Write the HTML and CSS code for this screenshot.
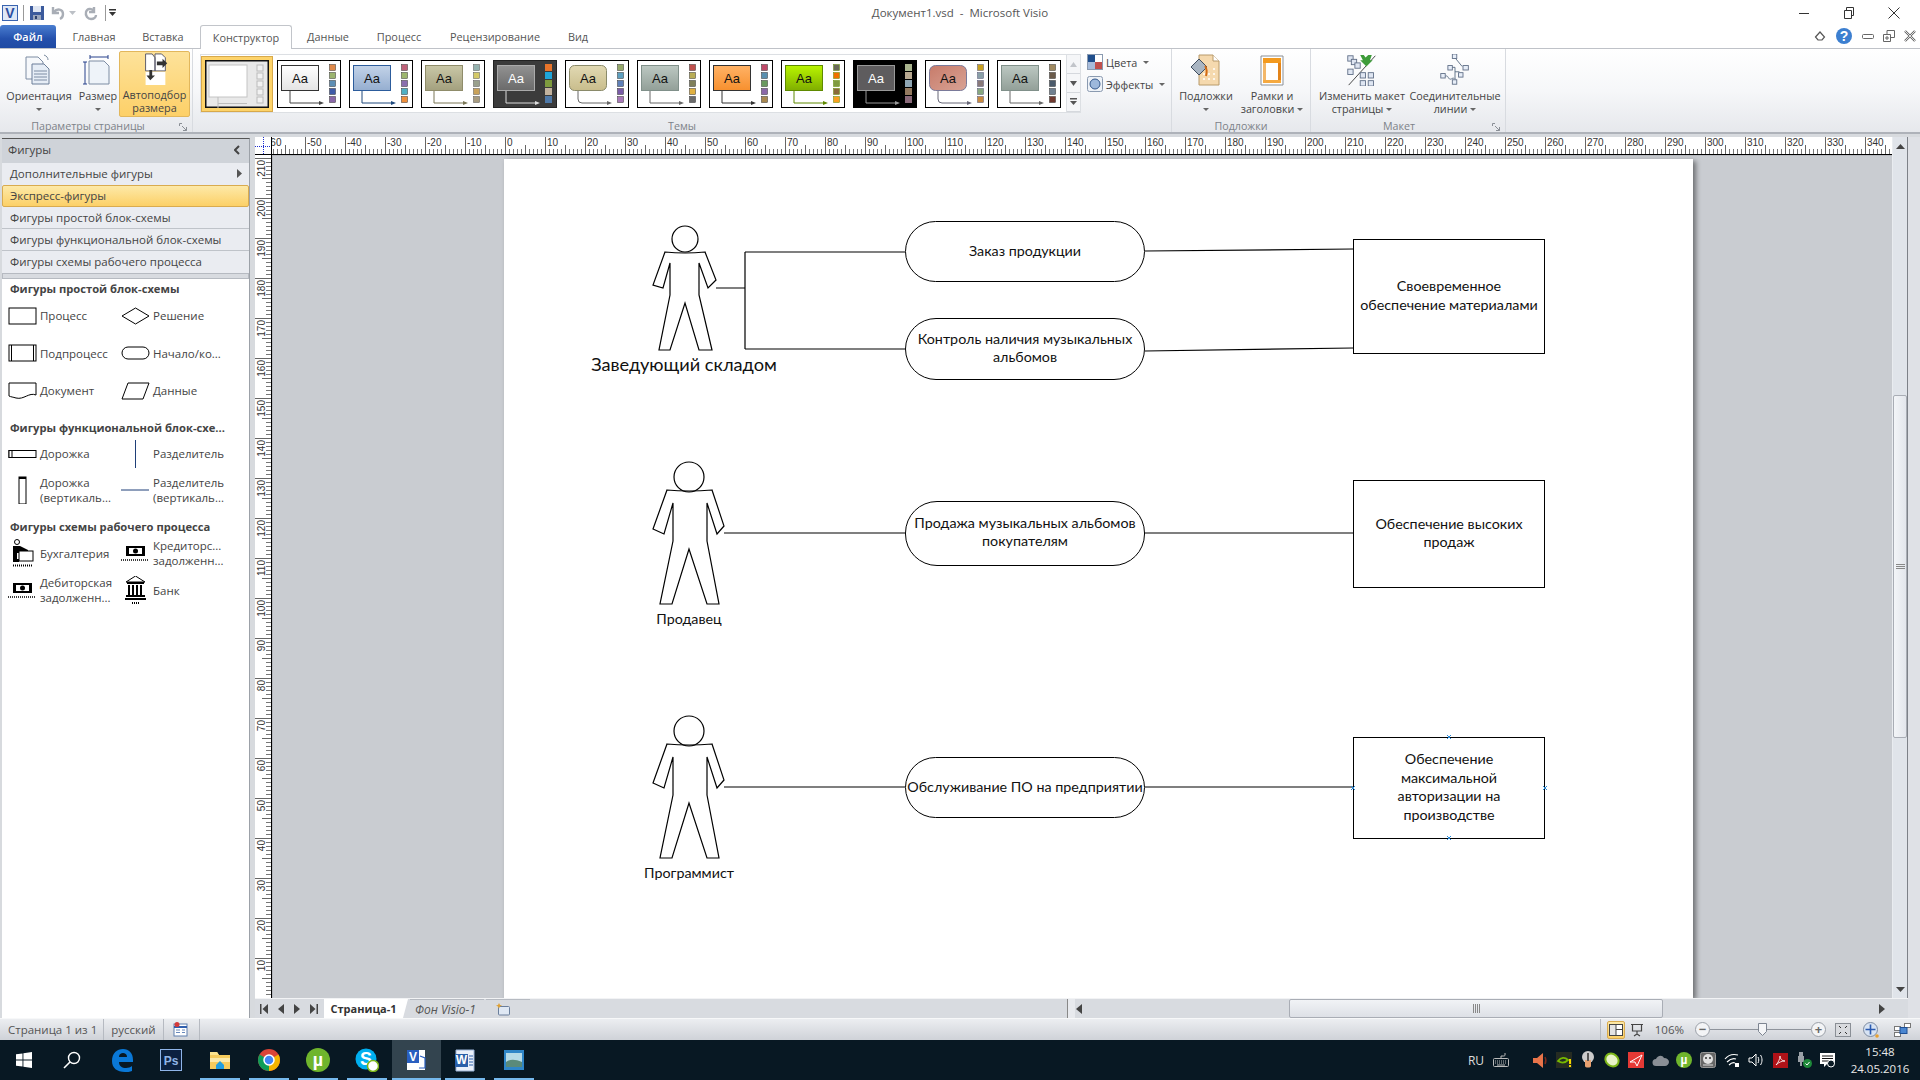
FILE: index.html
```html
<!DOCTYPE html>
<html lang="ru">
<head>
<meta charset="utf-8">
<title>Документ1.vsd - Microsoft Visio</title>
<link rel="stylesheet" href="styles.css">
</head>
<body>
<div class="app">
  <header class="titlebar">
    <div class="qat">
      <svg width="16" height="16" viewBox="0 0 16 16"><rect x=".5" y=".5" width="15" height="15" fill="#dfe8f6" stroke="#3a64b0"/><text x="8" y="13" class="ico-v">V</text></svg>
      <i class="qsep"></i>
      <svg width="16" height="16" viewBox="0 0 16 16"><path d="M1 1h14v14H1z" fill="#3b5a9c"/><path d="M4 1h8v6H4z" fill="#dfe6f2"/><path d="M4 10h8v5H4z" fill="#9aa6bc"/><path d="M6 11h2v3H6z" fill="#2b3f6c"/></svg>
      <svg class="q-undo" width="18" height="16" viewBox="0 0 18 16"><path d="M3 2v6h6M4 7c3-4 9-3 9 2 0 2-1 4-3 5" fill="none" stroke="#a9aeb6" stroke-width="2.4"/></svg>
      <svg width="7" height="6" viewBox="0 0 7 6" class="q-drop"><path d="M0 1h7L3.500 5z" fill="#bcc0c6"/></svg>
      <svg class="q-redo" width="16" height="16" viewBox="0 0 16 16"><path d="M11 2v5h-5M11 6C9 3 4 3 3 7c-1 4 2 7 5 7 3 0 5-2 5-4" fill="none" stroke="#a9aeb6" stroke-width="2.400"/></svg>
      <i class="qsep q-last"></i>
      <svg width="7" height="8" viewBox="0 0 7 8"><path d="M0 0h7v1.500H0zM0 3h7L3.500 7z" fill="#333"/></svg>
    </div>
    <div class="doc-title">Документ1.vsd  -  Microsoft Visio</div>
    <div class="winbtns">
      <svg width="12" height="12" viewBox="0 0 12 12"><path d="M1 6.500h10" stroke="#333"/></svg>
      <svg width="12" height="12" viewBox="0 0 12 12"><path d="M1.500 3.500h7v8h-7zM3.500 3.500v-3h7v8h-2" fill="none" stroke="#333"/></svg>
      <svg width="12" height="12" viewBox="0 0 12 12"><path d="M.5.500l11 11M11.500.500l-11 11" stroke="#333"/></svg>
    </div>
  </header>

  <nav class="tabs">
    <span class="tab tab-file">Файл</span>
    <span class="tab tab-home">Главная</span>
    <span class="tab tab-ins">Вставка</span>
    <span class="tab tab-active">Конструктор</span>
    <span class="tab tab-data">Данные</span>
    <span class="tab tab-proc">Процесс</span>
    <span class="tab tab-rev">Рецензирование</span>
    <span class="tab tab-view">Вид</span>
    <div class="mdibtns">
      <svg width="12" height="12" viewBox="0 0 12 12"><path d="M1.500 7L6 2l4.500 5L8 10H4z" fill="none" stroke="#555" stroke-width="1.200"/></svg>
      <svg width="18" height="18" viewBox="0 0 18 18"><circle cx="9" cy="9" r="8" fill="#3c7fd0"/><text x="9" y="14" class="ico-help">?</text></svg>
      <svg width="12" height="12" viewBox="0 0 12 12"><rect x=".5" y="4.500" width="11" height="4" rx="1" fill="none" stroke="#666"/></svg>
      <svg width="12" height="12" viewBox="0 0 12 12"><path d="M.5 4.500h7v7h-7zM4 4.500v-4h7.500v7h-4M3 7h2v2H3z" fill="none" stroke="#666"/></svg>
      <svg width="12" height="12" viewBox="0 0 12 12"><path d="M1 1l10 10M11 1L1 11" stroke="#666" stroke-width="2.400"/><path d="M1 1l10 10M11 1L1 11" stroke="#fff" stroke-width=".8"/></svg>
    </div>
  </nav>

  <section class="ribbon">
    <div class="group g-page">
      <div class="group-body">
        <div class="rbtn b-orient">
          <svg class="ricon" width="32" height="32" viewBox="0 0 32 32"><path d="M3 3h12l5 5v17H3z" fill="#f6f8fb" stroke="#7d8ca3"/><path d="M9 10h12l5 5v15H9z" fill="#e6edf6" stroke="#6d7f99"/><path d="M11 17h13M11 20h13M11 23h13M11 26h13" stroke="#7d8ca3"/><path d="M21 1c3 1 4 3 4 5" fill="none" stroke="#7a8a9e"/></svg>
          <span>Ориентация</span><b class="caret"></b>
        </div>
        <div class="rbtn b-size">
          <svg class="ricon" width="32" height="32" viewBox="0 0 32 32"><path d="M7 7h15l5 5v18H7z" fill="#eef3f9" stroke="#7d8ca3"/><path d="M3 8v22M1 8h4M1 30h4M8 3h18M8 1v4M26 1v4" stroke="#27408b" fill="none"/></svg>
          <span>Размер</span><b class="caret"></b>
        </div>
        <div class="rbtn b-fit">
          <svg class="ricon" width="32" height="34" viewBox="0 0 32 34"><path d="M6 1h7l3 4v14H6zM16 1h7l4 4v14H16z" fill="#fff" stroke="#556"/><path d="M6 20h21v14H6z" fill="#fff"/><path d="M18 9h6V6l5 5-5 5v-3h-6zM10 18v6H7l4 5 5-5h-3v-6z" fill="#333"/></svg>
          <span>Автоподбор размера</span>
        </div>
      </div>
      <div class="group-label gl-page">Параметры страницы<svg class="launch" width="8" height="8" viewBox="0 0 8 8"><path d="M.5 3V.5H3M7.500 7.500L3 3M7.500 4v3.500H4" fill="none" stroke="#8a8f96"/></svg></div>
    </div>

    <div class="group g-themes">
      <div class="group-body">
        <div class="gallery">
          <div class="thumbs">
            <div class="thumb-sel">
              <svg width="64" height="48" viewBox="0 0 64 48"><rect x=".75" y=".75" width="62.500" height="46.500" fill="#e9e9e9" stroke="#111" stroke-width="1.500"/><rect x="4" y="5" width="38" height="32" fill="#fff" stroke="#c4c4c4"/><path d="M13 37v11M13 43.500h29" fill="none" stroke="#bdbdbd"/><g fill="#f2f2f2" stroke="#bbb"><rect x="52" y="5" width="6" height="6"/><rect x="52" y="13" width="6" height="6"/><rect x="52" y="21" width="6" height="6"/><rect x="52" y="29" width="6" height="6"/><rect x="52" y="37" width="6" height="6"/></g></svg>
            </div>
            <svg width="64" height="48" viewBox="0 0 64 48"><defs><linearGradient id="g1" x1="0" y1="0" x2="0" y2="1"><stop offset="0" stop-color="#fff"/><stop offset="1" stop-color="#e4e4e4"/></linearGradient><linearGradient id="g2" x1="0" y1="0" x2="0" y2="1"><stop offset="0" stop-color="#c3d3e8"/><stop offset="1" stop-color="#95aed0"/></linearGradient><linearGradient id="g3" x1="0" y1="0" x2="0" y2="1"><stop offset="0" stop-color="#c9c7a7"/><stop offset="1" stop-color="#a3a07e"/></linearGradient><linearGradient id="g4" x1="0" y1="0" x2="0" y2="1"><stop offset="0" stop-color="#929292"/><stop offset="1" stop-color="#6a6a6a"/></linearGradient><linearGradient id="g5" x1="0" y1="0" x2="0" y2="1"><stop offset="0" stop-color="#e1d9b3"/><stop offset="1" stop-color="#c9bd8c"/></linearGradient><linearGradient id="g6" x1="0" y1="0" x2="0" y2="1"><stop offset="0" stop-color="#bcc8c2"/><stop offset="1" stop-color="#929f98"/></linearGradient><linearGradient id="g7" x1="0" y1="0" x2="0" y2="1"><stop offset="0" stop-color="#ffb266"/><stop offset="1" stop-color="#f7902e"/></linearGradient><linearGradient id="g8" x1="0" y1="0" x2="0" y2="1"><stop offset="0" stop-color="#b9f500"/><stop offset="1" stop-color="#7fae00"/></linearGradient><linearGradient id="g10" x1="0" y1="0" x2="1" y2="1"><stop offset="0" stop-color="#c77b6a"/><stop offset="1" stop-color="#d9a395"/></linearGradient></defs><rect x=".5" y=".5" width="63" height="47" fill="#fff" stroke="#000"/><rect x="4.500" y="5.500" width="37" height="25" fill="url(#g1)" stroke="#333"/><text x="23" y="23" class="aa">Aa</text><path d="M13 31v12h29" fill="none" stroke="#444"/><path d="M42 41l5 2-5 2z" fill="#444"/><g stroke="#333" stroke-width=".5"><rect x="52.500" y="4.500" width="6" height="6" fill="#e08a4a"/><rect x="52.500" y="12.500" width="6" height="6" fill="#9bb46e"/><rect x="52.500" y="20.500" width="6" height="6" fill="#5e8fb5"/><rect x="52.500" y="28.500" width="6" height="6" fill="#3f5ba8"/><rect x="52.500" y="36.500" width="6" height="6" fill="#8a68a8"/></g></svg>
            <svg width="64" height="48" viewBox="0 0 64 48"><rect x=".5" y=".5" width="63" height="47" fill="#fff" stroke="#000"/><rect x="4.500" y="5.500" width="37" height="25" fill="url(#g2)" stroke="#2c5c9c"/><text x="23" y="23" class="aa">Aa</text><path d="M13 31v12h29" fill="none" stroke="#1f497d"/><path d="M42 41l5 2-5 2z" fill="#1f497d"/><g stroke="#333" stroke-width=".5"><rect x="52.500" y="4.500" width="6" height="6" fill="#c0627a"/><rect x="52.500" y="12.500" width="6" height="6" fill="#9db66e"/><rect x="52.500" y="20.500" width="6" height="6" fill="#8a6fae"/><rect x="52.500" y="28.500" width="6" height="6" fill="#4fb0c4"/><rect x="52.500" y="36.500" width="6" height="6" fill="#ef8f3c"/></g></svg>
            <svg width="64" height="48" viewBox="0 0 64 48"><rect x=".5" y=".5" width="63" height="47" fill="#fff" stroke="#000"/><rect x="4.500" y="5.500" width="37" height="25" fill="url(#g3)" stroke="#8f8c6a"/><text x="23" y="23" class="aa">Aa</text><path d="M13 31v12h29" fill="none" stroke="#7a7757"/><path d="M42 41l5 2-5 2z" fill="#7a7757"/><g stroke="#555" stroke-width=".5"><rect x="52.500" y="4.500" width="6" height="6" fill="#95b3b0"/><rect x="52.500" y="12.500" width="6" height="6" fill="#d4c968"/><rect x="52.500" y="20.500" width="6" height="6" fill="#99a08c"/><rect x="52.500" y="28.500" width="6" height="6" fill="#c9a25a"/><rect x="52.500" y="36.500" width="6" height="6" fill="#a89c80"/></g></svg>
            <svg width="64" height="48" viewBox="0 0 64 48"><rect x=".5" y=".5" width="63" height="47" fill="#3b3b3b" stroke="#222"/><rect x="4.500" y="5.500" width="37" height="25" fill="url(#g4)" stroke="#aaa"/><text x="23" y="23" class="aa aa-w">Aa</text><path d="M13 31v12h29" fill="none" stroke="#ddd"/><path d="M42 41l5 2-5 2z" fill="#ddd"/><rect x="52" y="4" width="7" height="7" fill="#e8742a"/><rect x="52" y="12" width="7" height="7" fill="#1fa5d9"/><rect x="52" y="20" width="7" height="7" fill="#7e9b3e"/><rect x="52" y="28" width="7" height="7" fill="#c2b29e"/><rect x="52" y="36" width="7" height="7" fill="#4f79a8"/></svg>
            <svg width="64" height="48" viewBox="0 0 64 48"><rect x=".5" y=".5" width="63" height="47" fill="#fff" stroke="#000"/><rect x="4.500" y="5.500" width="37" height="25" rx="5" fill="url(#g5)" stroke="#8a8a6a"/><text x="23" y="23" class="aa">Aa</text><path d="M13 31v8q0 4 4 4h25" fill="none" stroke="#666"/><path d="M42 41l5 2-5 2z" fill="#666"/><g stroke="#333" stroke-width=".5"><rect x="52.500" y="4.500" width="6" height="6" fill="#96a96b"/><rect x="52.500" y="12.500" width="6" height="6" fill="#5ea0c0"/><rect x="52.500" y="20.500" width="6" height="6" fill="#5f80b8"/><rect x="52.500" y="28.500" width="6" height="6" fill="#7a5ca8"/><rect x="52.500" y="36.500" width="6" height="6" fill="#a878b8"/></g></svg>
            <svg width="64" height="48" viewBox="0 0 64 48"><rect x=".5" y=".5" width="63" height="47" fill="#fff" stroke="#000"/><rect x="4.500" y="5.500" width="37" height="25" fill="url(#g6)" stroke="#80908a"/><text x="23" y="23" class="aa">Aa</text><path d="M13 31v12h29" fill="none" stroke="#666"/><path d="M42 41l5 2-5 2z" fill="#666"/><g stroke="#333" stroke-width=".5"><rect x="52.500" y="4.500" width="6" height="6" fill="#c0504d"/><rect x="52.500" y="12.500" width="6" height="6" fill="#b8ac55"/><rect x="52.500" y="20.500" width="6" height="6" fill="#7f7f5a"/><rect x="52.500" y="28.500" width="6" height="6" fill="#e0b040"/><rect x="52.500" y="36.500" width="6" height="6" fill="#6b6b6b"/></g></svg>
            <svg width="64" height="48" viewBox="0 0 64 48"><rect x=".5" y=".5" width="63" height="47" fill="#fff" stroke="#000"/><rect x="4.500" y="5.500" width="37" height="25" fill="url(#g7)" stroke="#333"/><text x="23" y="23" class="aa">Aa</text><path d="M13 31v12h29" fill="none" stroke="#333"/><path d="M42 41l5 2-5 2z" fill="#333"/><g stroke="#333" stroke-width=".5"><rect x="52.500" y="4.500" width="6" height="6" fill="#c04a6a"/><rect x="52.500" y="12.500" width="6" height="6" fill="#5a90b0"/><rect x="52.500" y="20.500" width="6" height="6" fill="#6a9a60"/><rect x="52.500" y="28.500" width="6" height="6" fill="#8a68a8"/><rect x="52.500" y="36.500" width="6" height="6" fill="#a88850"/></g></svg>
            <svg width="64" height="48" viewBox="0 0 64 48"><rect x=".5" y=".5" width="63" height="47" fill="#fff" stroke="#000"/><rect x="4.500" y="5.500" width="37" height="25" fill="url(#g8)" stroke="#5f8a00"/><text x="23" y="23" class="aa">Aa</text><path d="M13 31v12h29" fill="none" stroke="#5f8a00"/><path d="M42 41l5 2-5 2z" fill="#5f8a00"/><g stroke="#5f8a00" stroke-width=".5"><rect x="52.500" y="4.500" width="6" height="6" fill="#6a6a5a"/><rect x="52.500" y="12.500" width="6" height="6" fill="#f07000"/><rect x="52.500" y="20.500" width="6" height="6" fill="#7f9a40"/><rect x="52.500" y="28.500" width="6" height="6" fill="#8a6a3a"/><rect x="52.500" y="36.500" width="6" height="6" fill="#f8a020"/></g></svg>
            <svg width="64" height="48" viewBox="0 0 64 48"><rect x=".5" y=".5" width="63" height="47" fill="#000" stroke="#000"/><rect x="4.500" y="5.500" width="37" height="25" fill="#5e5c5e" stroke="#999"/><text x="23" y="23" class="aa aa-w">Aa</text><path d="M13 31v12h29" fill="none" stroke="#999"/><path d="M42 41l5 2-5 2z" fill="#999"/><rect x="52" y="4" width="7" height="7" fill="#a9b48e"/><rect x="52" y="12" width="7" height="7" fill="#b8a890"/><rect x="52" y="20" width="7" height="7" fill="#8fa6b4"/><rect x="52" y="28" width="7" height="7" fill="#947a60"/><rect x="52" y="36" width="7" height="7" fill="#8a6a7a"/></svg>
            <svg width="64" height="48" viewBox="0 0 64 48"><rect x=".5" y=".5" width="63" height="47" fill="#fff" stroke="#000"/><rect x="4.500" y="5.500" width="37" height="25" rx="6" fill="url(#g10)" stroke="#7a7a9a"/><text x="23" y="23" class="aa">Aa</text><path d="M13 31v8q0 4 4 4h25" fill="none" stroke="#667"/><path d="M42 41l5 2-5 2z" fill="#667"/><g stroke="#557" stroke-width=".5"><rect x="52.500" y="4.500" width="6" height="6" fill="#c8a020"/><rect x="52.500" y="12.500" width="6" height="6" fill="#8aa0a8"/><rect x="52.500" y="20.500" width="6" height="6" fill="#8a7a7a"/><rect x="52.500" y="28.500" width="6" height="6" fill="#88a880"/><rect x="52.500" y="36.500" width="6" height="6" fill="#c88a40"/></g></svg>
            <svg width="64" height="48" viewBox="0 0 64 48"><rect x=".5" y=".5" width="63" height="47" fill="#fff" stroke="#000"/><rect x="4.500" y="5.500" width="37" height="25" fill="url(#g6)" stroke="#80908a"/><text x="23" y="23" class="aa">Aa</text><path d="M13 31v12h29" fill="none" stroke="#666"/><path d="M42 41l5 2-5 2z" fill="#666"/><g stroke="#333" stroke-width=".5"><rect x="52.500" y="4.500" width="6" height="6" fill="#a08a60"/><rect x="52.500" y="12.500" width="6" height="6" fill="#6a5a4a"/><rect x="52.500" y="20.500" width="6" height="6" fill="#4a5a6a"/><rect x="52.500" y="28.500" width="6" height="6" fill="#708090"/><rect x="52.500" y="36.500" width="6" height="6" fill="#703a30"/></g></svg>
          </div>
          <div class="gal-scroll">
            <div class="gs gs-up"><svg width="7" height="5" viewBox="0 0 7 5"><path d="M3.500 0L7 5H0z" fill="#c2c5ca"/></svg></div>
            <div class="gs gs-down"><svg width="7" height="5" viewBox="0 0 7 5"><path d="M0 0h7L3.500 5z" fill="#555"/></svg></div>
            <div class="gs"><svg width="7" height="8" viewBox="0 0 7 8"><path d="M0 0h7v1.500H0zM0 3h7L3.500 7z" fill="#555"/></svg></div>
          </div>
        </div>
        <div class="theme-side">
          <div class="side-row">
            <svg width="16" height="16" viewBox="0 0 16 16"><rect width="16" height="16" fill="#fff"/><path d="M1 1h7v7H1z" fill="#1f4e8c"/><path d="M8 1h7v7H8z" fill="#fff"/><path d="M1 8h7v7H1z" fill="#a7bcdc"/><path d="M8 8h7v7H8z" fill="#c0504d"/><rect x=".5" y=".5" width="15" height="15" fill="none" stroke="#8a9ab0"/></svg>
            <span>Цвета</span><b class="caret"></b>
          </div>
          <div class="side-row">
            <svg width="16" height="16" viewBox="0 0 16 16"><rect x=".5" y=".5" width="15" height="15" rx="2" fill="#eef2f7" stroke="#8a9ab0"/><circle cx="8" cy="8" r="5" fill="#9db8dc" stroke="#34588c"/></svg>
            <span>Эффекты</span><b class="caret"></b>
          </div>
        </div>
      </div>
      <div class="group-label">Темы</div>
    </div>

    <div class="group g-back">
      <div class="group-body">
        <div class="rbtn b-bg">
          <svg class="ricon" width="32" height="32" viewBox="0 0 32 32"><path d="M9 1h14l6 6v24H9z" fill="#f5d9ae" stroke="#b89a6a"/><path d="M23 1v6h6" fill="#fff" stroke="#b89a6a"/><g fill="#fff"><circle cx="14" cy="20" r="1"/><circle cx="19" cy="20" r="1"/><circle cx="24" cy="20" r="1"/><circle cx="14" cy="25" r="1"/><circle cx="19" cy="25" r="1"/><circle cx="24" cy="25" r="1"/><circle cx="24" cy="15" r="1"/></g><path d="M1 13l8-8 8 8-8 8z" fill="#a9b5c2" stroke="#3f4d5e"/><path d="M15 12c2 2 2 7 1 10" fill="none" stroke="#d46a12" stroke-width="2"/></svg>
          <span>Подложки</span><b class="caret"></b>
        </div>
        <div class="rbtn b-frames">
          <svg class="ricon" width="32" height="32" viewBox="0 0 32 32"><path d="M5 2h22v29H5z" fill="#fff" stroke="#8a8f96"/><path d="M7 4h18v5H7z" fill="#f39a1f"/><path d="M7 9h3v20H7z" fill="#f3b76a"/><path d="M22 9h3v20h-3z" fill="#e3841a"/><path d="M7 26h18v3H7z" fill="#f5a940"/></svg>
          <span>Рамки и<br><span class="nw">заголовки<b class="caret inline"></b></span></span>
        </div>
      </div>
      <div class="group-label">Подложки</div>
    </div>

    <div class="group g-layout">
      <div class="group-body">
        <div class="rbtn b-relayout">
          <svg class="ricon" width="34" height="36" viewBox="0 0 34 36"><path d="M2 35L32 2" stroke="#333"/><g fill="#dfe6f2" stroke="#5f6e86"><rect x="1" y="2" width="6" height="6"/><rect x="5" y="6" width="6" height="6"/><rect x="9" y="10" width="6" height="6"/><rect x="1" y="17" width="6" height="6"/><rect x="15" y="21" width="6" height="6"/><rect x="24" y="21" width="6" height="6"/><rect x="15" y="30" width="6" height="6"/><rect x="24" y="30" width="6" height="6"/></g><path d="M15 1h4l2 3 3-3h4l-2 6h3l-7 7-7-7h3z" fill="#3e9c3a"/></svg>
          <span>Изменить макет<br><span class="nw">страницы<b class="caret inline"></b></span></span>
        </div>
        <div class="rbtn b-conn">
          <svg class="ricon" width="34" height="36" viewBox="0 0 34 36"><g fill="none" stroke="#55687f"><path d="M16 3l9 11M10 15h7v12M22 20h-5M6 25c4-2 3 5 7 3 3-2 2 0 5 0"/></g><g fill="#e7eef8" stroke="#5f6e86"><rect x="14" y="0" width="5" height="5"/><rect x="26" y="13" width="6" height="5"/><rect x="9" y="13" width="5" height="5"/><rect x="21" y="21" width="5" height="5"/><rect x="1" y="22" width="5" height="5"/><rect x="14" y="29" width="5" height="5"/></g></svg>
          <span>Соединительные<br><span class="nw">линии<b class="caret inline"></b></span></span>
        </div>
      </div>
      <div class="group-label gl-layout">Макет<svg class="launch" width="8" height="8" viewBox="0 0 8 8"><path d="M.5 3V.5H3M7.500 7.500L3 3M7.500 4v3.500H4" fill="none" stroke="#8a8f96"/></svg></div>
    </div>
  </section>

  <main class="workspace">
    <aside class="shapes">
      <div class="sh-title"><span>Фигуры</span><svg width="6" height="10" viewBox="0 0 6 10"><path d="M5 1L1 5l4 4" fill="none" stroke="#444" stroke-width="2"/></svg></div>
      <div class="sh-row sh-more"><span>Дополнительные фигуры</span><svg width="5" height="9" viewBox="0 0 5 9"><path d="M0 0l5 4.500L0 9z" fill="#555"/></svg></div>
      <div class="sh-row sh-quick">Экспресс-фигуры</div>
      <div class="sh-row sh-line">Фигуры простой блок-схемы</div>
      <div class="sh-row sh-line">Фигуры функциональной блок-схемы</div>
      <div class="sh-row">Фигуры схемы рабочего процесса</div>
      <div class="sh-split"></div>
      <div class="stencil">
        <h3 class="st-h st-h1">Фигуры простой блок-схемы</h3>
        <div class="st-grid r-basic">
          <div class="st-item"><svg width="29" height="18" viewBox="0 0 29 18"><rect x="1" y="1" width="27" height="16" fill="#fff" stroke="#000"/></svg><span>Процесс</span></div>
          <div class="st-item"><svg width="29" height="18" viewBox="0 0 29 18"><path d="M1 9L14.500 1 28 9 14.500 17z" fill="#fff" stroke="#000"/></svg><span>Решение</span></div>
          <div class="st-item"><svg width="29" height="18" viewBox="0 0 29 18"><rect x="1" y="1" width="27" height="16" fill="#fff" stroke="#000"/><path d="M3.500 1v16M25.500 1v16" stroke="#000"/></svg><span>Подпроцесс</span></div>
          <div class="st-item"><svg width="29" height="18" viewBox="0 0 29 18"><rect x="1" y="3" width="27" height="12" rx="6" fill="#fff" stroke="#000"/></svg><span>Начало/ко...</span></div>
          <div class="st-item"><svg width="29" height="18" viewBox="0 0 29 18"><path d="M1 1h27v12c-7-3-12 5-20 3-3-1-5-1-7-2z" fill="#fff" stroke="#000"/></svg><span>Документ</span></div>
          <div class="st-item"><svg width="29" height="18" viewBox="0 0 29 18"><path d="M7 1h21l-6 16H1z" fill="#fff" stroke="#000"/></svg><span>Данные</span></div>
        </div>
        <h3 class="st-h st-h2">Фигуры функциональной блок-схе...</h3>
        <div class="st-grid r-func">
          <div class="st-item"><svg width="29" height="10" viewBox="0 0 29 10"><rect x="1" y="1.500" width="27" height="7" fill="#fff" stroke="#000"/><rect x="1" y="1.500" width="3" height="7" fill="#fff" stroke="#000"/></svg><span>Дорожка</span></div>
          <div class="st-item"><svg width="29" height="28" viewBox="0 0 29 28"><path d="M14.500 0v28" stroke="#1f3f78"/></svg><span>Разделитель</span></div>
          <div class="st-item"><svg width="29" height="28" viewBox="0 0 29 28"><rect x="11" y="1" width="7" height="27" fill="#fff" stroke="#000"/><rect x="11" y="1" width="7" height="2" fill="#000"/></svg><span>Дорожка<br>(вертикаль...</span></div>
          <div class="st-item"><svg width="29" height="4" viewBox="0 0 29 4"><path d="M0 2h28" stroke="#1f3f78"/></svg><span>Разделитель<br>(вертикаль...</span></div>
        </div>
        <h3 class="st-h st-h3">Фигуры схемы рабочего процесса</h3>
        <div class="st-grid r-flow">
          <div class="st-item"><svg width="29" height="28" viewBox="0 0 29 28"><circle cx="9" cy="3" r="2.500" fill="#fff" stroke="#000"/><path d="M5 7h7l8 4v3H9v6H5z" fill="#000"/><rect x="11" y="12" width="14" height="10" fill="#fff" stroke="#000"/><path d="M5 20h6v3H5z" fill="#000"/><path d="M5 26.500h20" stroke="#000" stroke-dasharray="1 1" stroke-width="2"/></svg><span>Бухгалтерия</span></div>
          <div class="st-item"><svg width="29" height="20" viewBox="0 0 29 20"><path d="M5 3h19v10H5z" fill="#000"/><path d="M8 5h13v6H8z" fill="#fff"/><circle cx="14.500" cy="8" r="2.500" fill="#000"/><path d="M0 17h28" stroke="#000" stroke-dasharray="1 1" stroke-width="1.500"/></svg><span>Кредиторс...<br>задолженн...</span></div>
          <div class="st-item"><svg width="29" height="20" viewBox="0 0 29 20"><path d="M5 3h19v10H5z" fill="#000"/><path d="M8 5h13v6H8z" fill="#fff"/><circle cx="14.500" cy="8" r="2.500" fill="#000"/><path d="M0 17h28" stroke="#000" stroke-dasharray="1 1" stroke-width="1.500"/></svg><span>Дебиторская<br>задолженн...</span></div>
          <div class="st-item"><svg width="29" height="28" viewBox="0 0 29 28"><path d="M14.500 0L24 6H5z" fill="#fff" stroke="#000"/><path d="M6 6h17v2H6zM7 9h2v10H7zM11 9h2v10h-2zM15 9h2v10h-2zM19 9h2v10h-2zM5 19h19v2H5zM4 22h21v2H4z" fill="#000"/><path d="M11 27h8" stroke="#000" stroke-dasharray="1 1" stroke-width="2"/></svg><span>Банк</span></div>
        </div>
      </div>
    </aside>

    <div class="drawing">
      <div class="corner"><svg width="16" height="17" viewBox="0 0 16 17"><path d="M0 9.500h16M8.500 0v17" stroke="#2030d0" stroke-dasharray="1 1"/></svg></div>
      <div class="hruler">
        <div class="hticks">
          <span>-60</span><span>-50</span><span>-40</span><span>-30</span><span>-20</span><span>-10</span><span>0</span><span>10</span><span>20</span><span>30</span><span>40</span><span>50</span><span>60</span><span>70</span><span>80</span><span>90</span><span>100</span><span>110</span><span>120</span><span>130</span><span>140</span><span>150</span><span>160</span><span>170</span><span>180</span><span>190</span><span>200</span><span>210</span><span>220</span><span>230</span><span>240</span><span>250</span><span>260</span><span>270</span><span>280</span><span>290</span><span>300</span><span>310</span><span>320</span><span>330</span><span>340</span>
        </div>
      </div>
      <div class="vscroll">
        <div class="sb-btn"><svg width="9" height="5" viewBox="0 0 9 5"><path d="M4.500 0L9 5H0z" fill="#444"/></svg></div>
        <div class="sb-track">
          <div class="sb-thumb-v"><svg width="9" height="6" viewBox="0 0 9 6"><path d="M0 .5h9M0 2.500h9M0 4.500h9" stroke="#888"/></svg></div>
        </div>
        <div class="sb-btn"><svg width="9" height="5" viewBox="0 0 9 5"><path d="M0 0h9L4.500 5z" fill="#444"/></svg></div>
      </div>
      <div class="edge"></div>
      <div class="vruler">
        <div class="vticks">
          <span><em>210</em></span><span><em>200</em></span><span><em>190</em></span><span><em>180</em></span><span><em>170</em></span><span><em>160</em></span><span><em>150</em></span><span><em>140</em></span><span><em>130</em></span><span><em>120</em></span><span><em>110</em></span><span><em>100</em></span><span><em>90</em></span><span><em>80</em></span><span><em>70</em></span><span><em>60</em></span><span><em>50</em></span><span><em>40</em></span><span><em>30</em></span><span><em>20</em></span><span><em>10</em></span>
        </div>
      </div>
      <div class="canvas">
        <div class="page">
          <svg class="wires" width="1189" height="839" viewBox="504 159 1189 839">
            <g fill="none" stroke="#000" stroke-width="1.200">
              <circle cx="685" cy="239" r="13"/>
              <path d="M665 252q20 2 40 0l11 28-8 8-9-25v32l13 55h-13l-14-47-15 47h-11l11-55v-32l-7 25-10-3z"/>
              <path d="M716 288h29M745 252v97M745 252h160M745 349h160M1145 251l208-2M1145 351l208-3"/>
              <circle cx="689" cy="477" r="15"/>
              <path d="M667 490q22 2 45 0l12 36-7 8-10-31v38l12 63h-12l-18-55-17 55h-12l13-63v-38l-9 31-11-5z"/>
              <path d="M724 533h181M1145 533h208"/>
              <circle cx="689" cy="731" r="15"/>
              <path d="M667 744q22 2 45 0l12 36-7 8-10-31v38l12 63h-12l-18-55-17 55h-12l13-63v-38l-9 31-11-5z"/>
              <path d="M724 787h181M1145 787h208"/>
            </g>
            <g fill="none" stroke="#2a8ad8" stroke-width="1">
              <path d="M1447 735l4 4M1451 735l-4 4M1447 836l4 4M1451 836l-4 4M1351 786l4 4M1355 786l-4 4M1543 786l4 4M1547 786l-4 4"/>
            </g>
          </svg>
          <div class="node oval n1">Заказ продукции</div>
          <div class="node oval n2">Контроль наличия музыкальных альбомов</div>
          <div class="node oval n3">Продажа музыкальных альбомов покупателям</div>
          <div class="node oval n4">Обслуживание ПО на предприятии</div>
          <div class="node box b1">Своевременное обеспечение материалами</div>
          <div class="node box b2">Обеспечение высоких продаж</div>
          <div class="node box b3">Обеспечение максимальной авторизации на производстве</div>
          <div class="actor a1">Заведующий складом</div>
          <div class="actor a2">Продавец</div>
          <div class="actor a3">Программист</div>
        </div>
      </div>
      <div class="tabrow">
        <div class="pagenav">
          <svg width="8" height="10" viewBox="0 0 8 10"><path d="M0 0h1.500v10H0zM8 0v10L2.500 5z" fill="#444"/></svg>
          <svg width="6" height="10" viewBox="0 0 6 10"><path d="M6 0v10L0 5z" fill="#444"/></svg>
          <svg width="6" height="10" viewBox="0 0 6 10"><path d="M0 0v10l6-5z" fill="#444"/></svg>
          <svg width="8" height="10" viewBox="0 0 8 10"><path d="M0 0v10l5.500-5zM6.500 0H8v10H6.500z" fill="#444"/></svg>
        </div>
        <span class="ptab ptab-on">Страница-1</span>
        <span class="ptab ptab-bg">Фон Visio-1</span>
        <span class="ptab ptab-new"><svg width="15" height="13" viewBox="0 0 15 13"><rect x="2.500" y="3.500" width="11" height="8.500" rx="1" fill="#dfe8f4" stroke="#6a7f9c"/><path d="M3 0l1 2 2 .5L4 3.500 3 5.500 2 3.500 0 2.500 2 2z" fill="#e0a030"/></svg></span>
        <div class="hscroll">
          <i class="hs-split"></i>
          <svg width="6" height="10" viewBox="0 0 6 10"><path d="M6 0v10L0 5z" fill="#444"/></svg>
          <div class="hs-track"><div class="hs-thumb"><svg width="7" height="9" viewBox="0 0 7 9"><path d="M.5 0v9M2.500 0v9M4.500 0v9M6.500 0v9" stroke="#888"/></svg></div></div>
          <svg class="hs-next" width="6" height="10" viewBox="0 0 6 10"><path d="M0 0v10l6-5z" fill="#444"/></svg>
        </div>
      </div>
    </div>
  </main>

  <footer class="status">
    <span class="st st-page">Страница 1 из 1</span>
    <span class="st st-lang">русский</span>
    <span class="st st-icon"><svg width="15" height="15" viewBox="0 0 15 15"><rect x="1" y="2" width="13" height="12" fill="#fff" stroke="#5f7fae"/><path d="M1 5h13" stroke="#2f5fae" stroke-width="2"/><path d="M3 8h4M9 8h3M3 10.500h4M9 10.500h3" stroke="#6a8abc"/><circle cx="4" cy="2.500" r="2.500" fill="#d43a3a"/></svg></span>
    <div class="st-right">
      <span class="view-on"><svg width="14" height="12" viewBox="0 0 14 12"><rect x=".5" y=".5" width="13" height="11" fill="#fff" stroke="#444"/><path d="M7 .5v11M7 5.500h6.500" stroke="#444"/><path d="M1 1h6v10H1z" fill="#444" opacity=".15"/></svg></span>
      <span class="view-pres"><svg width="14" height="14" viewBox="0 0 14 14"><path d="M1 1.500h12M2.500 2v6h9V2M7 8v3M4 13l3-2 3 2" fill="none" stroke="#444" stroke-width="1.200"/></svg></span>
      <span class="zoom-val">106%</span>
      <span class="zbtn zminus"><i>−</i></span>
      <span class="slider"><svg class="zthumb" width="9" height="13" viewBox="0 0 9 13"><path d="M.5.500h8v8l-4 4-4-4z" fill="#f4f5f7" stroke="#7d8591"/></svg></span>
      <span class="zbtn"><i>+</i></span>
      <span class="zfit"><svg width="16" height="14" viewBox="0 0 16 14"><rect x=".5" y=".5" width="15" height="13" fill="#d8dade" stroke="#8a8f96"/><path d="M4 3l2 2M12 3l-2 2M4 11l2-2M12 11l-2-2" stroke="#333"/></svg></span>
      <span class="zpan"><svg width="16" height="16" viewBox="0 0 16 16"><circle cx="7.500" cy="7.500" r="7" fill="#d7e3f3" stroke="#7d8ba0"/><path d="M7.500 2.500v10M2.500 7.500h10" stroke="#2a5ab0" stroke-width="1.600"/><circle cx="14" cy="14" r="1.800" fill="#e8a030"/></svg></span>
      <span class="zswitch"><svg width="17" height="14" viewBox="0 0 17 14"><rect x=".5" y="3.500" width="6" height="4" fill="#fff" stroke="#777"/><rect x="10.500" y=".5" width="6" height="4" fill="#fff" stroke="#777"/><rect x=".5" y="9.500" width="6" height="4" fill="#fff" stroke="#777"/><rect x="6" y="4.500" width="7" height="6" fill="#4a86d0" stroke="#1f4f94"/></svg></span>
    </div>
  </footer>

  <div class="taskbar">
    <span class="tk"><svg width="16" height="16" viewBox="0 0 16 16"><path d="M0 2.300L6.500 1.400V7.500H0zM7.400 1.300L16 0V7.500H7.400zM0 8.400H6.500V14.600L0 13.700zM7.400 8.400H16V16L7.400 14.800z" fill="#fff"/></svg></span>
    <span class="tk"><svg width="18" height="18" viewBox="0 0 18 18"><circle cx="11" cy="7" r="5.500" fill="none" stroke="#fff" stroke-width="1.400"/><path d="M7 11l-6 6" stroke="#fff" stroke-width="1.600"/></svg></span>
    <span class="tk tk-gap"><svg width="22" height="24" viewBox="0 0 22 24"><path d="M1 13C1 5 6 1 12 1c6 0 10 4 10 11v2H8c0 4 3 6 7 6 2 0 5-1 6-2v5c-2 1-5 1-7 1C6 24 1 20 1 13zM8 9h8c0-3-2-4-4-4S8 6 8 9z" fill="#0a78d7"/></svg></span>
    <span class="tk"><svg width="22" height="22" viewBox="0 0 22 22"><rect x=".5" y=".5" width="21" height="21" fill="#0c2040" stroke="#8fb4e8"/><text x="11" y="16" class="ico-ps">Ps</text></svg></span>
    <span class="tk tk-run"><svg width="22" height="24" viewBox="0 0 22 24"><path d="M1 4h7l2 3h11v14H1z" fill="#f5cb5c"/><path d="M1 4h7l2 3H1z" fill="#fbe38e"/><path d="M1 10h20v4H1z" fill="#fbe9a8"/><path d="M7 17l4-4 4 4v4H7z" fill="#1f9ee0"/></svg></span>
    <span class="tk tk-run"><svg width="22" height="22" viewBox="0 0 22 22"><circle cx="11" cy="11" r="11" fill="#db4437"/><path d="M11 11L20.500 5.500A11 11 0 0 1 11 22z" fill="#f4b400"/><path d="M11 11l0 11A11 11 0 0 1 1.500 5.500z" fill="#0f9d58"/><circle cx="11" cy="11" r="5" fill="#4285f4" stroke="#fff" stroke-width="1.500"/></svg></span>
    <span class="tk tk-run"><svg width="24" height="24" viewBox="0 0 24 24"><circle cx="12" cy="12" r="12" fill="#6fb52c"/><text x="12" y="18" class="ico-mu">µ</text></svg></span>
    <span class="tk tk-run"><svg width="24" height="24" viewBox="0 0 24 24"><circle cx="11" cy="11" r="10.500" fill="#00aff0"/><text x="11" y="17" class="ico-mu">S</text><circle cx="18" cy="18" r="5.500" fill="#fff" stroke="#7cb518" stroke-width="1.500"/></svg></span>
    <span class="tk tk-run tk-active"><svg width="22" height="24" viewBox="0 0 22 24"><path d="M2 2h18v20H2z" fill="#fff"/><path d="M2 2h12v13H2z" fill="#2a5fc0"/><text x="8" y="13" class="ico-vis">V</text><path d="M15 8l5 2v10h-6" fill="none" stroke="#2a5fc0" stroke-width="1.200"/></svg></span>
    <span class="tk tk-run"><svg width="22" height="24" viewBox="0 0 22 24"><path d="M2 2h18v21H2z" fill="#eaf0fa" stroke="#9ab2d6"/><path d="M1 6h13v13H1z" fill="#2a5fa8"/><text x="7.500" y="16" class="ico-vis">W</text><path d="M15 8h4M15 11h4M15 14h4M15 17h4" stroke="#2a5fa8"/></svg></span>
    <span class="tk tk-run"><svg width="22" height="22" viewBox="0 0 22 22"><rect x="1" y="1" width="20" height="20" fill="#2f86c8"/><rect x="3" y="4" width="16" height="14" fill="#b6dbe8"/><path d="M3 13c4-3 9-3 16 0v5H3z" fill="#5a8a7a"/></svg></span>

    <div class="tray">
      <span class="tr-lang">RU</span>
      <span class="tr tr-kbd"><svg width="16" height="14" viewBox="0 0 16 14"><path d="M12 0v2c0 1-1 1-2 1H8v2" fill="none" stroke="#bbb"/><rect x=".5" y="5.500" width="15" height="8" rx="1" fill="none" stroke="#bbb"/><path d="M2 8h12M2 10h12" stroke="#bbb" stroke-dasharray="1 1"/><path d="M4 12h8" stroke="#bbb"/></svg></span>
      <span class="tr"><svg width="17" height="17" viewBox="0 0 17 17"><path d="M1 6h4l6-5v15l-6-5H1z" fill="#e8744a"/><path d="M13 5c1 2 1 5 0 7" stroke="#7a2a1c" stroke-width="1.500" fill="none"/></svg></span>
      <span class="tr"><svg width="16" height="16" viewBox="0 0 16 16"><rect width="16" height="16" fill="#262c22"/><path d="M2 9c3-4 7-4 10-1-3 3-7 3-10 1z" fill="none" stroke="#76b900" stroke-width="1.800"/><path d="M13 7h2v5h-2zM13 13h2v2h-2z" fill="#f4d400"/></svg></span>
      <span class="tr"><svg width="16" height="18" viewBox="0 0 16 18"><circle cx="8" cy="6" r="6" fill="#ccc"/><path d="M5 9h6v6c0 2-6 2-6 0z" fill="#e8a070"/><path d="M7 2h2v8H7z" fill="#555"/></svg></span>
      <span class="tr"><svg width="16" height="16" viewBox="0 0 16 16"><ellipse cx="8" cy="8" rx="7" ry="6" transform="rotate(40 8 8)" fill="#e8f2c8" stroke="#7cb518" stroke-width="2"/></svg></span>
      <span class="tr"><svg width="16" height="16" viewBox="0 0 16 16"><rect width="16" height="16" fill="#e53935"/><path d="M2 10l12-7-5 11-2-4z" fill="none" stroke="#fff"/></svg></span>
      <span class="tr"><svg width="17" height="11" viewBox="0 0 17 11"><path d="M4 11a3.500 3.500 0 0 1 0-7c1-3 6-5 8-1 3 0 5 2 5 4s-2 4-4 4z" fill="#8a8f96"/></svg></span>
      <span class="tr"><svg width="16" height="16" viewBox="0 0 16 16"><circle cx="8" cy="8" r="8" fill="#6fb52c"/><text x="8" y="12" class="ico-mu2">µ</text></svg></span>
      <span class="tr"><svg width="16" height="16" viewBox="0 0 16 16"><rect x=".5" y=".5" width="15" height="15" rx="2" fill="#666" stroke="#999"/><circle cx="8" cy="7" r="5" fill="#e0e0e0"/><circle cx="6" cy="6" r="1" fill="#333"/><circle cx="10" cy="6" r="1" fill="#333"/><path d="M3 13h10" stroke="#ddd"/></svg></span>
      <span class="tr"><svg width="16" height="14" viewBox="0 0 16 14"><path d="M1 6c4-5 9-5 13-4M3 9c3-3 6-4 9-3M5 12c2-2 4-3 6-2" fill="none" stroke="#fff" stroke-width="1.200"/><path d="M11 10h4v4h-4z" fill="#fff"/></svg></span>
      <span class="tr"><svg width="16" height="14" viewBox="0 0 16 14"><path d="M1 5h3l4-4v12L4 9H1z" fill="none" stroke="#fff"/><path d="M10 4c1 2 1 4 0 6M12.500 2c2 3 2 7 0 10" fill="none" stroke="#fff"/></svg></span>
      <span class="tr"><svg width="15" height="15" viewBox="0 0 15 15"><rect width="15" height="15" fill="#b01218"/><path d="M3 12c2-2 4-6 4-9 0 3 2 5 5 5-3 0-6 1-9 4z" fill="none" stroke="#fff" stroke-width=".8"/></svg></span>
      <span class="tr"><svg width="16" height="16" viewBox="0 0 16 16"><path d="M3 0h4v4h1v6H2V4h1zM4 10h2v4H4z" fill="#9aa0a6"/><circle cx="11.500" cy="11.500" r="4.500" fill="#1e8a3a"/><path d="M9.500 11.500l1.500 1.500 2.500-3" fill="none" stroke="#fff"/></svg></span>
      <span class="tr"><svg width="16" height="15" viewBox="0 0 16 15"><path d="M0 0h15v11H7l-3 3v-3H0z" fill="#fff"/><path d="M2 3h11M2 5.500h11M2 8h7" stroke="#111"/><circle cx="11" cy="10.500" r="3.500" fill="#0a1a24" stroke="#fff"/></svg></span>
      <span class="clock"><span>15:48</span><span>24.05.2016</span></span>
    </div>
  </div>
</div>
</body>
</html>
```
FILE: styles.css
```css
* { box-sizing: border-box; }
html, body { margin: 0; padding: 0; height: 100%; overflow: hidden; }
body { font-family: "Open Sans", "Noto Sans", "Liberation Sans", sans-serif; font-size: 11.5px; color: #444; background: #fff; }
.app { width: 1920px; height: 1080px; display: flex; flex-direction: column; }
svg { display: block; flex: none; }
h3 { margin: 0; }
em { font-style: normal; }
.nw { white-space: nowrap; }

/* title bar */
.titlebar { height: 25px; flex: none; display: flex; align-items: center; position: relative; background: #fff; }
.qat { display: flex; align-items: center; padding-left: 2px; }
.qsep { width: 1px; height: 16px; background: #999; margin: 0 5px 0 5px; }
.q-undo { margin-left: 5px; }
.q-drop { margin: 0 7px 0 1px; }
.q-last { margin: 0 3px 0 6px; }
.ico-v { font: bold 14px "Liberation Sans", sans-serif; fill: #2a4ea0; text-anchor: middle; }
.doc-title { position: absolute; left: 0; right: 0; text-align: center; font-size: 11.500px; color: #555; white-space: pre; }
.winbtns { margin-left: auto; display: flex; gap: 33px; padding-right: 20px; }

/* tabs */
.tabs { height: 23px; flex: none; display: flex; align-items: stretch; background: #fff; position: relative; font-size: 10.900px; color: #555; }
.tab { display: flex; align-items: center; justify-content: center; }
.tab-file { width: 56px; background: linear-gradient(#4a7ed0, #2450ac 60%, #1f4aa3); color: #fff; border-radius: 3px 3px 0 0; font-weight: 600; }
.tab-home { width: 76px; }
.tab-ins { width: 62px; margin-right: 6px; }
.tab-active { width: 92px; border: 1px solid #c2c5ca; border-bottom: 0; border-radius: 3px 3px 0 0; background: #fff; margin-bottom: -1px; position: relative; z-index: 2; }
.tab-data { width: 72px; }
.tab-proc { width: 70px; }
.tab-rev { width: 122px; }
.tab-view { width: 44px; }
.mdibtns { margin-left: auto; display: flex; align-items: center; gap: 9px; padding-right: 4px; margin-top: -2px; }
.ico-help { font: bold 14px "Liberation Sans", sans-serif; fill: #fff; text-anchor: middle; }

/* ribbon */
.ribbon { height: 86px; flex: none; display: flex; border-top: 1px solid #bfc2c8; border-bottom: 2px solid #aeb2b9; background: linear-gradient(#fff, #f6f7f9 50%, #e6e8ec); position: relative; }
.group { display: flex; flex-direction: column; border-right: 1px solid #d8dbe0; }
.group-body { height: 72px; display: flex; padding-top: 2px; }
.group-label { height: 12px; text-align: center; font-size: 10.700px; line-height: 13px; color: #7d8289; position: relative; }
.gl-page { padding-right: 16px; }
.gl-layout { padding-right: 18px; }
.launch { position: absolute; right: 5px; top: 3px; }
.g-page { width: 193px; }
.g-themes { width: 979px; }
.g-themes .group-body { padding-left: 7px; padding-top: 5px; }
.g-back { width: 139px; }
.g-layout { width: 195px; }
.rbtn { display: flex; flex-direction: column; align-items: center; text-align: center; padding-top: 3px; font-size: 10.800px; line-height: 13px; color: #444; height: 66px; }
.ricon { height: 32px; margin-bottom: 3px; }
.b-orient { width: 78px; }
.b-size { width: 40px; }
.b-fit { width: 71px; margin-left: 1px; background: linear-gradient(#fde29a, #fdd068); border: 1px solid #e2b75c; border-radius: 2px; padding-top: 0; }
.b-fit .ricon { margin-bottom: 3px; margin-top: 1px; }
.b-bg { width: 68px; }
.b-frames { width: 64px; }
.b-relayout { width: 92px; margin-left: 5px; }
.b-conn { width: 94px; }
.caret { display: block; width: 0; height: 0; border: 3px solid transparent; border-top: 3px solid #666; border-bottom: 0; margin-top: 6px; }
.caret.inline { display: inline-block; margin: 0 0 2px 3px; vertical-align: middle; }

.gallery { width: 881px; height: 59px; display: flex; border: 1px solid #dcdfe3; background: #fff; }
.thumbs { flex: 1; display: flex; gap: 8px; padding: 5px 0 0 4px; align-items: flex-start; }
.thumb-sel { outline: 3px solid #fdd36a; box-shadow: 0 0 0 4px #d8a94a; }
.aa { font: 13px "Liberation Sans", sans-serif; fill: #111; text-anchor: middle; }
.aa-w { fill: #fff; }
.gal-scroll { width: 14px; display: flex; flex-direction: column; border-left: 1px solid #dcdfe3; }
.gs { flex: 1; display: flex; align-items: center; justify-content: center; border-bottom: 1px solid #d5d8dd; background: #f5f6f8; }
.theme-side { margin-left: 6px; display: flex; flex-direction: column; gap: 6px; padding-top: 0; }
.side-row { display: flex; align-items: center; gap: 3px; font-size: 10.800px; height: 16px; }
.side-row .caret { margin: 0 0 0 3px; }

/* workspace */
.workspace { height: 884px; flex: none; display: flex; background: #d7dade; padding-top: 3px; }
.shapes { width: 248px; margin-right: 5px; margin-left: 2px; flex: none; display: flex; flex-direction: column; background: #eaecf1; border-right: 1px solid #9ca1a8; font-size: 11.500px; color: #444; border-top: 1px solid #555; margin-top: 1px; }
.sh-title { height: 24px; flex: none; background: #cfd3d9; display: flex; align-items: center; justify-content: space-between; padding: 0 9px 3px 6px; font-size: 11.500px; }
.sh-row { height: 22px; flex: none; display: flex; align-items: center; padding: 0 0 2px 8px; }
.sh-more { justify-content: space-between; padding-right: 7px; }
.sh-quick { background: linear-gradient(#fde9a8, #fcd067); border: 1px solid #d9ab4f; border-radius: 2px; padding-left: 7px; }
.sh-line { border-bottom: 1px solid #bfc3c9; padding-bottom: 1px; }
.sh-split { height: 6px; flex: none; border: 1px solid #b6bac1; background: #d8dbe0; }
.stencil { flex: 1; background: #fff; padding-left: 6px; }
.st-h { font-size: 11.200px; font-weight: 700; color: #444; padding-left: 2px; line-height: 14px; white-space: nowrap; }
.st-h1 { margin-top: 3px; }
.st-h2 { margin-top: 11px; }
.st-h3 { margin-top: 12px; }
.st-grid { display: grid; grid-template-columns: 113px 113px; }
.r-basic { grid-auto-rows: 37.500px; margin-top: 1px; }
.r-func { grid-auto-rows: 36px; margin-top: 1px; }
.r-flow { grid-auto-rows: 37px; margin-top: 1px; }
.st-item { display: flex; align-items: center; line-height: 15px; color: #444; white-space: nowrap; }
.st-item svg { width: 29px; margin-right: 3px; }

/* drawing */
.drawing { flex: 1; display: grid; grid-template-columns: 17px 1620px 16px 12px; grid-template-rows: 18px 843px 20px; min-width: 0; }
.corner { background: #fff; border-right: 1px solid #000; border-bottom: 1px solid #000; }
.hruler { background: #fff; overflow: hidden; border-bottom: 1px solid #000; }
.hticks { width: 1640px; height: 17px; margin-left: -7px; display: flex; font: 10px/11px "Liberation Sans", sans-serif; color: #333;
  background:
    repeating-linear-gradient(90deg, #666 0 1px, transparent 1px 40px) left bottom / 100% 100% no-repeat,
    repeating-linear-gradient(90deg, #666 0 1px, transparent 1px 20px) left bottom / 100% 9px no-repeat,
    repeating-linear-gradient(90deg, #777 0 1px, transparent 1px 4px) left bottom / 100% 5px no-repeat; }
.hticks span { width: 40px; flex: none; padding-left: 2px; }
.vscroll { grid-column: 3; grid-row: 1 / 3; background: #e0e4ea; display: flex; flex-direction: column; border-left: 1px solid #e9ecf0; border-right: 1px solid #7d8188; }
.edge { grid-column: 4; grid-row: 1 / 4; background: #dfe1e6; }
.sb-btn { height: 18px; flex: none; display: flex; align-items: center; justify-content: center; }
.sb-track { flex: 1; padding-top: 240px; }
.sb-thumb-v { height: 343px; background: linear-gradient(90deg, #f3f5f8, #e3e6ec); border: 1px solid #a9adb5; border-radius: 2px; display: flex; align-items: center; justify-content: center; }
.vruler { background: #fff; border-right: 1px solid #000; overflow: hidden; }
.vticks { margin-top: 3px; height: 840px; display: flex; flex-direction: column; font: 10px/10px "Liberation Sans", sans-serif; color: #333;
  background:
    repeating-linear-gradient(180deg, #666 0 1px, transparent 1px 40px) right top / 100% 100% no-repeat,
    repeating-linear-gradient(180deg, #666 0 1px, transparent 1px 20px) right top / 9px 100% no-repeat,
    repeating-linear-gradient(180deg, #777 0 1px, transparent 1px 4px) right top / 5px 100% no-repeat; }
.vticks span { height: 40px; flex: none; padding: 2px 0 0 2px; }
.vticks em { display: block; writing-mode: vertical-rl; transform: rotate(180deg); width: 10px; }
.canvas { background: #c9ccd1; padding: 4px 0 0 232px; overflow: hidden; box-shadow: inset 1px 1px 0 #b5b8be; }
.page { width: 1189px; height: 839px; background: #fff; position: relative; box-shadow: 3px 2px 5px rgba(0,0,0,.45); font-family: Lato, "Open Sans", "Noto Sans", sans-serif; font-size: 14.300px; color: #111; }
.wires { position: absolute; left: 0; top: 0; z-index: 1; }
.node { position: absolute; display: flex; align-items: center; justify-content: center; text-align: center; background: #fff; border: 1.200px solid #000; line-height: 18.500px; padding: 0 4px 2px; }
.oval { left: 401px; width: 240px; border-radius: 32px; }
.box { left: 849px; width: 192px; }
.n1 { top: 62px; height: 61px; padding-bottom: 0; }
.n2 { top: 159px; height: 62px; }
.n3 { top: 342px; height: 65px; padding-bottom: 3px; }
.n4 { top: 598px; height: 61px; white-space: nowrap; padding: 0; }
.b1 { top: 80px; height: 115px; }
.b2 { top: 321px; height: 108px; padding: 0 20px 2px; }
.b3 { top: 578px; height: 102px; padding: 0 30px 2px; }
.actor { position: absolute; text-align: center; white-space: nowrap; width: 240px; line-height: 20px; }
.a1 { left: 60px; top: 195px; font-size: 18.200px; line-height: 20px; }
.a2 { left: 65px; top: 450px; }
.a3 { left: 65px; top: 704px; }

/* page tabs + hscroll */
.tabrow { grid-column: 1 / 4; background: #d8dbe0; display: flex; align-items: stretch; border-top: 1px solid #f2f3f5; font-size: 11.500px; }
.pagenav { width: 69px; flex: none; display: flex; align-items: center; gap: 10px; padding-left: 5px; }
.ptab { display: flex; align-items: center; justify-content: center; }
.ptab-on { width: 84px; background: #fff; font-weight: 700; font-size: 11px; color: #333; padding-right: 5px; clip-path: polygon(0 0, 100% 0, 94% 100%, 0 100%); }
.ptab-bg { width: 74px; font-style: italic; font-size: 12px; color: #555; border-top: 1px solid #b6bac1; margin-left: 2px; padding-right: 3px; }
.ptab-new { width: 44px; border-top: 1px solid #b6bac1; margin-left: 2px; justify-content: flex-start; padding-left: 10px; }
.hscroll { flex: 1; display: flex; align-items: center; margin-left: 537px; gap: 1px; }
.hs-split { width: 8px; height: 100%; background: #e8eaee; border-left: 1px solid #888; }
.hs-track { flex: 1; height: 100%; padding-left: 206px; padding-right: 215px; }
.hs-thumb { height: 100%; background: linear-gradient(#f1f3f6, #dde0e6); border: 1px solid #a9adb5; border-radius: 2px; display: flex; align-items: center; justify-content: center; }
.hs-next { margin-right: 23px; }

/* status bar */
.status { height: 22px; flex: none; display: flex; align-items: stretch; background: linear-gradient(#eceef1, #cfd2d8); border-top: 1px solid #f7f8f9; font-size: 11.500px; color: #555; }
.st { display: flex; align-items: center; border-right: 1px solid #b6bac1; padding-bottom: 1px; }
.st-page { width: 104px; padding-left: 8px; }
.st-lang { width: 60px; justify-content: center; }
.st-icon { width: 36px; padding-left: 9px; }
.st-right { margin-left: auto; display: flex; align-items: center; border-left: 1px solid #b6bac1; height: 100%; }
.view-on { margin-left: 6px; width: 18px; height: 18px; background: linear-gradient(#fde9a8, #fcd067); border: 1px solid #d9ab4f; border-radius: 2px; display: flex; align-items: center; justify-content: center; }
.view-pres { width: 24px; display: flex; justify-content: center; }
.zoom-val { width: 35px; text-align: right; }
.zbtn { width: 15px; height: 15px; border-radius: 50%; background: #f3f4f6; border: 1px solid #9ba0a8; display: flex; align-items: center; justify-content: center; font-size: 13px; line-height: 13px; font-weight: 700; color: #666; margin-left: 5px; }
.zbtn i { font-style: normal; }
.zminus { margin-left: 11px; }
.slider { width: 101px; height: 1px; background: #8f949c; position: relative; margin-right: -5px; }
.zthumb { position: absolute; left: 48px; top: -6px; }
.zfit { width: 16px; margin-left: 9px; }
.zpan { width: 16px; margin-left: 12px; }
.zswitch { width: 17px; margin: 0 9px 0 15px; }

/* taskbar */
.taskbar { height: 40px; flex: none; background: #081823; display: flex; align-items: center; position: relative; color: #e8e8e8; }
.tk { width: 48px; height: 40px; flex: none; display: flex; align-items: center; justify-content: center; position: relative; }
.tk-gap { margin-left: 1.500px; width: 49px; }
.tk:nth-child(n+4) { width: 49px; }
.tk-run::after { content: ""; position: absolute; left: 4px; right: 5px; bottom: 0; height: 2px; background: #76b9ed; }
.tk-active { background: #33444f; }
.tk-active::after { left: 0; right: 0; }
.ico-ps { font: bold 12px "Liberation Sans", sans-serif; fill: #8fb4e8; text-anchor: middle; }
.ico-mu { font: bold 18px "Liberation Sans", sans-serif; fill: #fff; text-anchor: middle; }
.ico-mu2 { font: bold 12px "Liberation Sans", sans-serif; fill: #fff; text-anchor: middle; }
.ico-vis { font: bold 12px "Liberation Sans", sans-serif; fill: #fff; text-anchor: middle; }
.tray { margin-left: auto; display: flex; align-items: center; height: 100%; }
.tr { width: 24px; display: flex; justify-content: center; flex: none; }
.tr-lang { width: 26px; font-size: 12px; color: #ddd; text-align: center; }
.tr-kbd { margin-right: 15px; }
.clock { width: 80px; display: flex; flex-direction: column; align-items: center; font-size: 11.500px; line-height: 17px; color: #e8e8e8; }
```
